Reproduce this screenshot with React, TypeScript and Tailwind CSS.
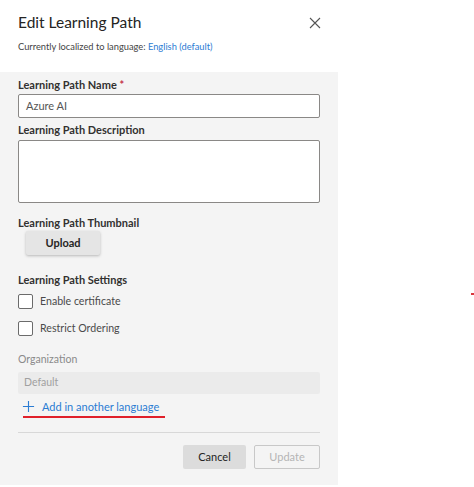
import React from 'react';

const font = { fontFamily: '"Segoe UI", Lato, "Noto Sans", sans-serif' };

const Checkbox = ({ label }: { label: string }) => (
  <label className="flex items-center gap-[7px] h-[15px]">
    <span className="w-[15px] h-[15px] rounded-[2px] border border-[#6b6b6b] bg-white shrink-0" />
    <span className="text-[10.6px] text-[#4a4a4a] leading-none">{label}</span>
  </label>
);

export default function App() {
  return (
    <div className="relative w-[474px] h-[487px] bg-white text-[#323130]" style={font}>
      {/* Header */}
      <div className="px-[18px] pt-[11px] h-[72px] relative">
        <h1 className="text-[15.5px] leading-[22px] text-[#252423]">Edit Learning Path</h1>
        <p className="mt-[7px] text-[9.3px] leading-[14px] text-[#444]">
          Currently localized to language: <span className="text-[#2b7cd3]">English (default)</span>
        </p>
        <button className="absolute left-[309px] top-[17px] w-[12px] h-[12px] text-[#555]">
          <svg viewBox="0 0 12 12" width="12" height="12" fill="none" stroke="currentColor" strokeWidth="1.1">
            <path d="M1 1 L11 11 M11 1 L1 11" />
          </svg>
        </button>
      </div>

      {/* Form body */}
      <div className="w-[338px] h-[413px] bg-[#f4f4f4] px-[18px] pt-[5px] flex flex-col">
        <div className="text-[11px] font-bold leading-[16px] text-[#323130]">
          Learning Path Name <span className="text-[#c4314b]">*</span>
        </div>
        <div className="mt-[1px] w-[302px] h-[24px] bg-white border border-[#8a8886] rounded-[2px] px-[7px] flex items-center text-[11px] text-[#555]">
          Azure AI
        </div>
        <div className="mt-[4px] text-[11px] font-bold leading-[16px]">Learning Path Description</div>
        <div className="mt-[2px] w-[302px] h-[63px] bg-white border border-[#8a8886] rounded-[2px]" />

        <div className="mt-[12px] text-[11px] font-bold leading-[16px]">Learning Path Thumbnail</div>
        <button className="mt-[0px] ml-[8px] w-[74px] h-[24px] bg-[#e5e5e5] rounded-[2px] shadow-[0_1px_3px_rgba(0,0,0,0.25)] text-[11px] font-bold text-[#252423]">
          Upload
        </button>

        <div className="mt-[17px] text-[11px] font-bold leading-[16px]">Learning Path Settings</div>
        <div className="mt-[6px] flex flex-col gap-[12px]">
          <Checkbox label="Enable certificate" />
          <Checkbox label="Restrict Ordering" />
        </div>

        <div className="mt-[15px] text-[10.5px] leading-[16px] text-[#8a8a8a]">Organization</div>
        <div className="mt-[5px] w-[302px] h-[22px] bg-[#ebebeb] rounded-[2px] px-[6px] flex items-center text-[10.5px] text-[#a0a0a0]">
          Default
        </div>

        <div className="mt-[3px] ml-[4px] flex items-center gap-[7px] h-[18px] text-[#2b7cd3]">
          <svg viewBox="0 0 14 14" width="13" height="13" fill="none" stroke="currentColor" strokeWidth="1.2">
            <path d="M7 1 V13 M1 7 H13" />
          </svg>
          <span className="text-[11px] leading-none">Add in another language</span>
        </div>
        <div className="ml-[5px] w-[142px] h-[2px] bg-[#e0202a] mt-[1px]" />

        <div className="mt-[14px] w-[302px] h-px bg-[#d8d8d8]" />

        <div className="mt-[12px] w-[302px] flex justify-end gap-[8px]">
          <button className="w-[63px] h-[24px] bg-[#dcdcdc] rounded-[2px] text-[11px] text-[#252423]">Cancel</button>
          <button className="w-[66px] h-[24px] bg-[#f4f4f4] border border-[#c8c8c8] rounded-[2px] text-[11px] text-[#b5b5b5]">
            Update
          </button>
        </div>
      </div>

      {/* small red mark at the right edge */}
      <div className="absolute left-[471px] top-[293px] w-[3px] h-[2px] bg-[#d9363e]" />
    </div>
  );
}
